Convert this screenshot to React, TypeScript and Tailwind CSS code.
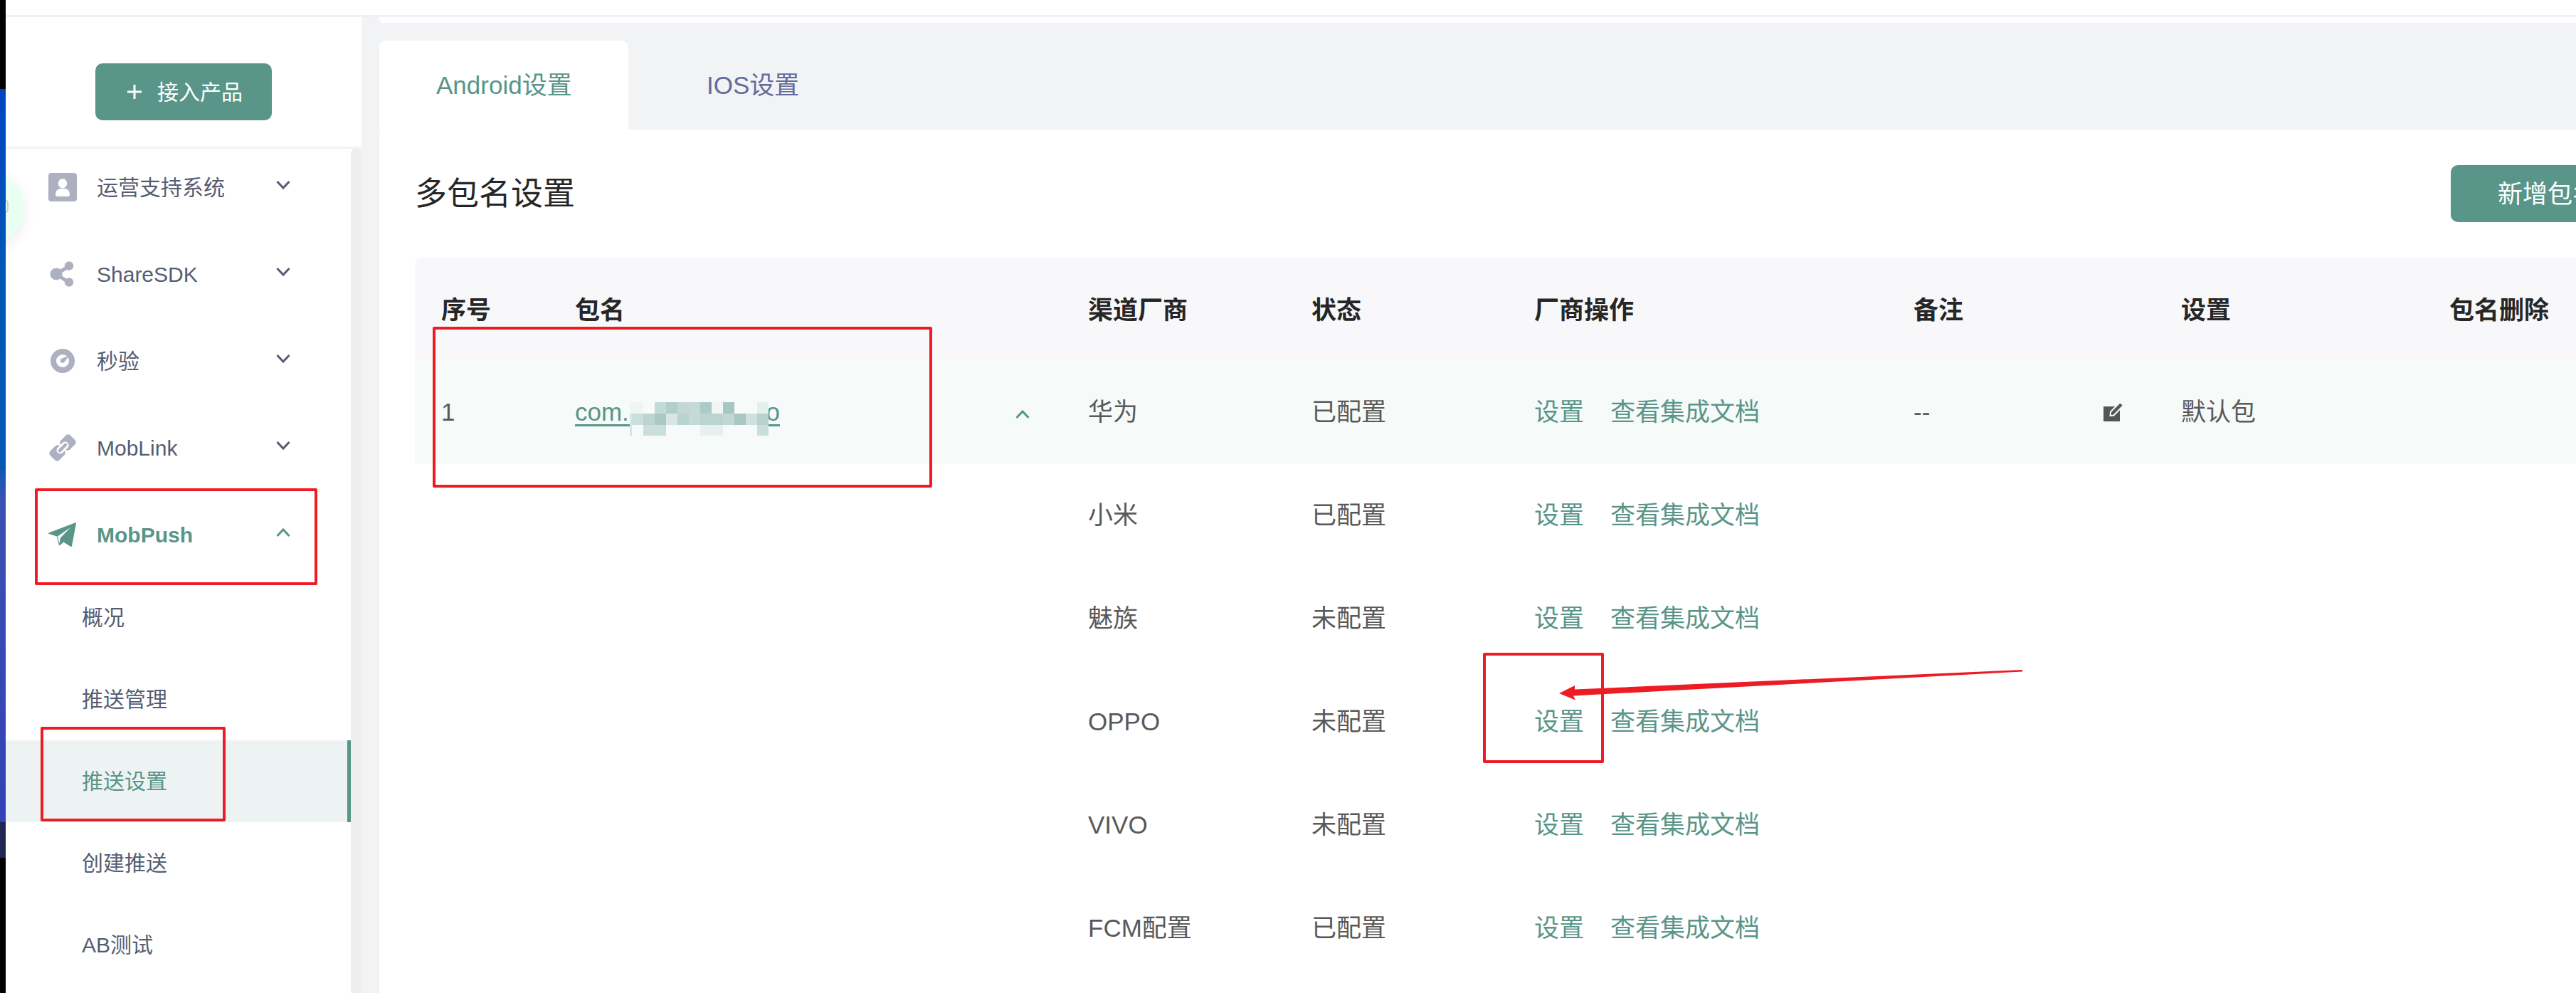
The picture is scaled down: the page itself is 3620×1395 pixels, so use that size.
import type { ReactNode } from "react"

const menu = [
    { label: "运营支持系统", icon: "user" },
    { label: "ShareSDK", icon: "share" },
    { label: "秒验", icon: "gauge" },
    { label: "MobLink", icon: "link" },
    { label: "MobPush", icon: "plane", open: true }
]

const subMenu = ["概况", "推送管理", "推送设置", "创建推送", "AB测试"]

const vendors = [
    { name: "华为", status: "已配置" },
    { name: "小米", status: "已配置" },
    { name: "魅族", status: "未配置" },
    { name: "OPPO", status: "未配置" },
    { name: "VIVO", status: "未配置" },
    { name: "FCM配置", status: "已配置" }
]

// x, y, w, h, color of each blurred block over the package name
const mosaic: [number, number, number, number, string][] = [
    [0, 0, 19, 16, "#eff4f5"],
    [35, 0, 16, 16, "#c4dbd5"],
    [51, 0, 16, 16, "#b1ceca"],
    [67, 0, 16, 16, "#c3d8d3"],
    [83, 0, 16, 16, "#c5dad5"],
    [99, 0, 16, 16, "#adcbc6"],
    [115, 0, 16, 16, "#f1f6f4"],
    [131, 0, 16, 16, "#a6c8c1"],
    [179, 0, 16, 16, "#e5efed"],
    [0, 16, 3, 31, "#d6e6e2"],
    [3, 16, 16, 16, "#cadeda"],
    [19, 16, 16, 16, "#bcd5d1"],
    [35, 16, 16, 16, "#aac9c3"],
    [51, 16, 16, 16, "#d8e6e4"],
    [67, 16, 16, 16, "#b9d4cf"],
    [83, 16, 16, 16, "#c5dad6"],
    [99, 16, 16, 16, "#bbd4cf"],
    [115, 16, 16, 16, "#bbd4cf"],
    [131, 16, 16, 16, "#c0d7d3"],
    [147, 16, 16, 16, "#a7c7c1"],
    [163, 16, 16, 16, "#cfe0dd"],
    [179, 16, 16, 16, "#b9d2cd"],
    [19, 32, 32, 15, "#cadeda"],
    [99, 32, 32, 15, "#e7f0ee"],
    [179, 32, 16, 15, "#cadeda"]
]

function MenuIcon({ name }: { name: string }) {
    return (
        <svg width="40" height="40" viewBox="0 0 40 40" fill="currentColor" className="shrink-0">
            {name === "user" && (
                <>
                    <rect width="40" height="40" rx="4" />
                    <ellipse cx="20" cy="14.700" rx="6.2" ry="6.800" fill="#fff" />
                    <path d="M10 30c0-5 3.500-8 7.500-8h5c4 0 7.500 3 7.500 8 0 2-1 3-2.500 3h-15C11 33 10 32 10 30z" fill="#fff" />
                </>
            )}
            {name === "share" && (
                <>
                    <path d="M11 20L29 9M11 20l18 12" stroke="currentColor" strokeWidth="5" />
                    <circle cx="11" cy="20" r="8.5" />
                    <circle cx="29" cy="8.5" r="6.2" />
                    <circle cx="29" cy="31.5" r="6.2" />
                </>
            )}
            {name === "gauge" && (
                <>
                    <circle cx="20" cy="20" r="13" fill="none" stroke="currentColor" strokeWidth="8" />
                    <path d="M29 12.500l-6 8.500c-1 2-3 2.500-5 1s-1.500-4 0-5z" />
                </>
            )}
            {name === "link" && (
                <g transform="rotate(-45 20 20)">
                    <rect x="0" y="11" width="19" height="18" rx="4.500" />
                    <rect x="21" y="11" width="19" height="18" rx="4.500" />
                    <rect x="10" y="15" width="20" height="10" rx="5" fill="#fff" />
                    <rect x="12" y="17.800" width="16" height="4.400" rx="2.200" />
                </g>
            )}
            {name === "plane" && (
                <>
                    <path d="M.5 17.500L38 3.200q1.200-.2 1 1L33 36q-.6 1.500-2 .8L21.300 30.500l-5 4.500q-1 .8-1.500-.5L12 22.500.5 19q-1-.7 0-1.500z" />
                    <path d="M31 10L13 22.500l2.500 10 1.500-8z" fill="#fff" />
                </>
            )}
        </svg>
    )
}

function Chevron({ up, className }: { up?: boolean; className?: string }) {
    return (
        <svg width="22" height="14" viewBox="0 0 22 14" fill="none" stroke="currentColor" strokeWidth="3" className={className}>
            <path d={up ? "M2.500 12L11 3l8.500 9" : "M2.500 2L11 11l8.500-9"} />
        </svg>
    )
}

function Sidebar() {
    return (
        <aside className="w-[500px] shrink-0 flex flex-col bg-white">
            <div className="h-[185px] shrink-0 border-b-[3px] border-[#f3f3f4] pt-[65px] pl-[126px]">
                <button className="flex items-center w-[248px] h-20 pl-[44px] rounded-[10px] bg-[#599588] text-white">
                    <svg width="22" height="22" viewBox="0 0 22 22" stroke="currentColor" strokeWidth="3">
                        <path d="M11 1v20M1 11h20" />
                    </svg>
                    <span className="ml-[21px] mt-[2px] text-[30px] leading-none">接入产品</span>
                </button>
            </div>
            <div className="flex flex-1 min-h-0">
                <nav className="flex-1 text-[30px] text-[#565d72] overflow-hidden">
                    {menu.map((item, index) => (
                        <div
                            key={item.label}
                            className={`flex items-center pl-[60px] pr-[84px] ${index === 0 ? "h-[113px] pb-[9px]" : "h-[122px]"} ${item.open ? "text-[#599588] font-bold" : ""}`}
                        >
                            <span className={`mt-[3px] ${item.open ? "" : "text-[#adb0c0]"}`}>
                                <MenuIcon name={item.icon} />
                            </span>
                            <span className="ml-[28px] mt-[5px] flex-1 leading-none">{item.label}</span>
                            <Chevron up={item.open} className="-mt-[3px]" />
                        </div>
                    ))}
                    {subMenu.map(label => (
                        <div
                            key={label}
                            className={`flex items-center h-[115px] pl-[107px] leading-none ${label === "推送设置" ? "bg-[#edf3f3] text-[#599588] border-r-[5px] border-[#599588]" : ""}`}
                        >
                            {label}
                        </div>
                    ))}
                </nav>
                <div className="w-[15px] bg-[#eeeeee] rounded-t-[6px]" />
            </div>
        </aside>
    )
}

function Row({ className, cells }: { className?: string; cells: ReactNode[] }) {
    return (
        <div className={`grid grid-cols-[188px_721px_314px_313px_533px_376px_377px_377px] h-[145px] items-center ${className ?? ""}`}>
            {cells.map((cell, index) => (
                <div key={index} className="pl-[37px] whitespace-nowrap">{cell}</div>
            ))}
        </div>
    )
}

function PackageName() {
    return (
        <div className="flex items-center justify-between pr-[44px] text-[#599588]">
            <span className="relative w-[288px] flex justify-between mt-[2px] border-b-[3px] border-[#599588] leading-[34px]">
                <span>com.</span>
                <span>o</span>
                <svg width="195" height="47" viewBox="0 0 195 47" shapeRendering="crispEdges" className="absolute left-[77px] top-[3px]">
                    <rect width="195" height="47" fill="#f6faf9" />
                    {mosaic.map(([x, y, w, h, fill]) => (
                        <rect key={`${x}-${y}`} x={x} y={y} width={w} height={h} fill={fill} />
                    ))}
                </svg>
            </span>
            <Chevron up className="mt-[5px]" />
        </div>
    )
}

function Remark() {
    return (
        <div className="flex items-center justify-between pr-[44px]">
            <span>--</span>
            <svg width="28" height="28" viewBox="0 0 28 28">
                <path d="M0 5h23v21H0z" fill="#555" />
                <path d="M9.500 18l.5-5.500L22.500 0h2L28 3.500 14.500 17.500z" fill="#555" stroke="#f6faf9" strokeWidth="2" />
            </svg>
        </div>
    )
}

function Actions() {
    return (
        <div className="flex gap-[37px] text-[#599588]">
            <a>设置</a>
            <a>查看集成文档</a>
        </div>
    )
}

function Content() {
    return (
        <main className="flex-1 min-w-0 pl-[25px] flex flex-col bg-[#f2f3f5] text-[35px]">
            <div className="h-2 shrink-0 bg-white rounded-bl-[5px]" />
            <div className="flex mt-[25px] h-[125px] shrink-0 leading-none">
                <div className="w-[350px] pl-20 flex items-center bg-white rounded-t-[10px] text-[#599588]">Android设置</div>
                <div className="pl-[110px] flex items-center text-[#626b9c]">IOS设置</div>
            </div>
            <section className="flex-1 pl-[50px] bg-white rounded-tl-[5px]">
                <div className="h-[180px] flex items-center justify-between">
                    <h1 className="text-[45px] leading-none text-[#262626]">多包名设置</h1>
                    <button className="w-[176px] h-20 pt-[3px] pl-[66px] overflow-hidden rounded-l-[10px] bg-[#599588] text-white text-left whitespace-nowrap">
                        新增包名
                    </button>
                </div>
                <div className="text-[#595959]">
                    <Row
                        className="pt-[4px] bg-[#f8f8fa] rounded-tl-[10px] font-bold text-[#262626]"
                        cells={["序号", "包名", "渠道厂商", "状态", "厂商操作", "备注", "设置", "包名删除"]}
                    />
                    {vendors.map((vendor, index) => (
                        <Row
                            key={vendor.name}
                            className={index === 0 ? "bg-[#f6faf9]" : ""}
                            cells={
                                index === 0
                                    ? ["1", <PackageName />, vendor.name, vendor.status, <Actions />, <Remark />, "默认包", ""]
                                    : ["", "", vendor.name, vendor.status, <Actions />, "", "", ""]
                            }
                        />
                    ))}
                </div>
            </section>
        </main>
    )
}

export default function App() {
    return (
        <div className="relative w-[3620px] h-[1395px] flex overflow-hidden bg-white font-['Liberation_Sans','Noto_Sans_CJK_SC',sans-serif]">
            {/* Desktop showing behind the browser window */}
            <div className="relative z-10 w-2 shrink-0 bg-black pt-[125px]">
                <div className="h-[535px] bg-linear-to-b from-[#0044c4] via-[#0058b4] to-[#005ab4]" />
                <div className="h-[50px] bg-linear-to-b from-[#0c59b4] to-[#3b50b2]" />
                <div className="h-[445px] bg-linear-to-b from-[#3b50b2] to-[#3340b8]" />
                <div className="h-[50px] bg-[#20264f]" />
            </div>
            <div className="flex-1 min-w-0 flex flex-col">
                <header className="h-6 shrink-0 bg-white border-b-[3px] border-[#f0f0f6]" />
                <div className="flex flex-1 min-h-0">
                    <Sidebar />
                    <Content />
                </div>
            </div>

            {/* Floating helper bubble */}
            <div className="absolute left-[-77px] top-[237px] w-[110px] h-[110px] rounded-full bg-[#e8fff2] shadow-[0_6px_20px_rgba(0,0,0,0.08)]" />
            <div className="absolute left-[-4px] top-[280px] w-4 h-5 rounded-[6px] border-2 border-[#c4cfcb]" />

            {/* Annotations */}
            <div className="absolute left-[49px] top-[686px] w-[397px] h-[136px] border-4 border-[#ed1c24] rounded-[2px]" />
            <div className="absolute left-[57px] top-[1021px] w-[260px] h-[133px] border-4 border-[#ed1c24] rounded-[2px]" />
            <div className="absolute left-[608px] top-[459px] w-[702px] h-[226px] border-4 border-[#ed1c24] rounded-[2px]" />
            <div className="absolute left-[2084px] top-[917px] w-[170px] h-[155px] border-4 border-[#ed1c24] rounded-[2px]" />
            <svg width="652" height="44" viewBox="0 0 652 44" className="absolute left-[2191px] top-[940px]" fill="#ed1c24">
                <path d="M0 34L22 23v5.500L651 1v2.500L20 37.500l3 6z" />
            </svg>
        </div>
    )
}
